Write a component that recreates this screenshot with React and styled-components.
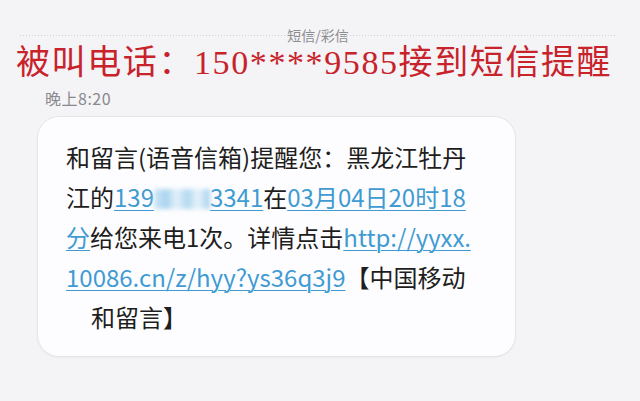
import * as React from "react"
import styled, { createGlobalStyle } from "styled-components";

const GlobalStyle = createGlobalStyle`
html, body {
	margin: 0;
	padding: 0;
	background: #f4f3f6;
}
`;

const Page = styled.div`
	width: 640px;
	height: 401px;
	overflow: hidden;
	background: #f4f3f6;
	padding-top: 27px;
	box-sizing: border-box;
	font-family: "Noto Sans CJK SC", Roboto, sans-serif;
`;

const Divider = styled.div`
	margin: 0 24px 0 20px;
	height: 16px;
	line-height: 16px;
	text-align: center;
	font-size: 14px;
	color: #8d8d90;
	background-image: repeating-linear-gradient(to right, #d2d0d6 0 1px, transparent 1px 3px);
	background-size: 100% 1px;
	background-position: 0 8px;
	background-repeat: no-repeat;
`;

const Title = styled.h1`
	margin: 2px 0 0;
	padding-left: 16px;
	height: 36px;
	line-height: 36px;
	font-size: 34px;
	font-weight: 400;
	letter-spacing: 1.6px;
	color: #c8222b;
	white-space: nowrap;
	font-family: "Liberation Serif", "Noto Sans CJK SC", serif;
`;

const Time = styled.div`
	padding-left: 45px;
	margin-top: 7px;
	height: 20px;
	line-height: 20px;
	font-size: 16px;
	letter-spacing: 0.5px;
	color: #8a8a8e;
`;

const Bubble = styled.div`
	margin: 8px 0 0 37px;
	width: 479px;
	box-sizing: border-box;
	padding: 20px 20px 19px 28px;
	background: #fdfdff;
	border: 1px solid #e6e5ea;
	border-radius: 22px;
	box-shadow: 0 1px 2px rgba(0, 0, 0, 0.04);
	color: #1e1e20;
	font-size: 24px;
`;

const Line = styled.div`
	height: 40px;
	line-height: 40px;
	white-space: nowrap;
	padding-left: ${(p) => (p.$indent ? "25px" : "0")};
`;

const Link = styled.span`
	color: #3f9bd2;
	text-decoration: underline;
	text-decoration-thickness: 1px;
	text-underline-offset: 3px;
`;

const Mosaic = styled.span`
	display: inline-block;
	width: 56px;
	height: 20px;
	vertical-align: -2px;
	background: linear-gradient(90deg, #cfe6f5 0%, #a9d4ef 22%, #e4f1fa 40%, #b1d8f0 60%, #e8f3fa 78%, #a6d1ee 100%);
	filter: blur(2px);
`;

const App = () => {
	return (
		<>
			<GlobalStyle />
			<Page>
				<Divider>短信/彩信</Divider>
				<Title>被叫电话：150****9585接到短信提醒</Title>
				<Time>晚上8:20</Time>
				<Bubble>
					<Line>和留言(语音信箱)提醒您：黑龙江牡丹</Line>
					<Line>
						江的<Link>139</Link><Mosaic /><Link>3341</Link>在<Link>03月04日20时18</Link>
					</Line>
					<Line>
						<Link>分</Link>给您来电1次。详情点击<Link>http://yyxx.</Link>
					</Line>
					<Line>
						<Link>10086.cn/z/hyy?ys36q3j9</Link>【中国移动
					</Line>
					<Line $indent>和留言】</Line>
				</Bubble>
			</Page>
		</>
	);
}

export default App
